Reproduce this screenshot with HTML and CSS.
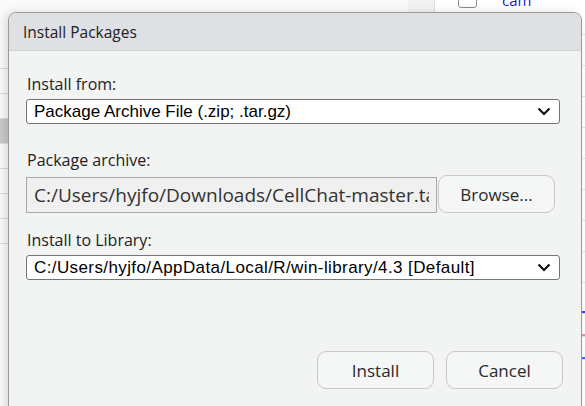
FILE: index.html
```html
<!DOCTYPE html>
<html dir="ltr" lang="en">
  <head>
    <meta charset="utf-8">
    <title>Install Packages</title>
    <link rel="stylesheet" href="styles.css">
  </head>
  <body>
    <div class="backdrop">
      <div class="leftpane">
        <div class="row"></div>
        <div class="row"></div>
        <div class="row"></div>
        <div class="row selected"></div>
        <div class="row"></div>
        <div class="row"></div>
        <div class="row"></div>
        <div class="row"></div>
      </div>
      <div class="midpane"></div>
      <div class="rightpane">
        <div class="pkgrow">
          <span class="checkbox"></span>
          <span class="pkgname">cam</span>
        </div>
        <div class="row"></div>
        <div class="row"></div>
        <div class="row"></div>
        <div class="row"></div>
        <div class="row"></div>
        <div class="row"></div>
        <div class="row"></div>
        <div class="row"></div>
        <div class="row mark-blue"></div>
        <div class="row short mark-pink"></div>
        <div class="row short mark-mixed"></div>
      </div>
    </div>

    <div class="dialog">
      <div class="titlebar">Install Packages</div>
      <div class="dialogbody">
        <label class="fieldlabel">Install from:</label>
        <div class="selectbox">
          <span>Package Archive File (.zip; .tar.gz)</span>
          <svg class="chevron" width="14" height="9" viewBox="0 0 14 9"><path d="M1.5 1.5 L7 7 L12.5 1.5" fill="none" stroke="#111" stroke-width="2.2"/></svg>
        </div>

        <label class="fieldlabel spaced">Package archive:</label>
        <div class="filerow">
          <input class="filepath" type="text" value="C:/Users/hyjfo/Downloads/CellChat-master.tar.gz" readonly>
          <button class="dlgbutton browse">Browse...</button>
        </div>

        <label class="fieldlabel">Install to Library:</label>
        <div class="selectbox library">
          <span>C:/Users/hyjfo/AppData/Local/R/win-library/4.3 [Default]</span>
          <svg class="chevron" width="14" height="9" viewBox="0 0 14 9"><path d="M1.5 1.5 L7 7 L12.5 1.5" fill="none" stroke="#111" stroke-width="2.2"/></svg>
        </div>

        <div class="actions">
          <button class="dlgbutton">Install</button>
          <button class="dlgbutton">Cancel</button>
        </div>
      </div>
    </div>
  </body>
</html>
```

FILE: styles.css
```css
html, body {
  margin: 0;
  height: 100%;
  overflow: hidden;
  background: #fff;
  font-family: "Open Sans", "Noto Sans", sans-serif;
}
.backdrop {
  display: flex;
  height: 100%;
}
.leftpane {
  width: 408px;
  padding-top: 44px;
  background: #fafafa;
}
.leftpane .row {
  height: 24px;
  border-bottom: 1px solid #dcdcdc;
}
.leftpane .selected {
  background: #c9c9c9;
}
.midpane {
  width: 26px;
  background: #f2f2f2;
  border-right: 1px solid #dedede;
}
.rightpane {
  flex: 1;
}
.rightpane .row {
  height: 30px;
  border-bottom: 1px solid #e2e2e2;
}
.rightpane .short {
  height: 22px;
}
.pkgrow {
  height: 34px;
  display: flex;
  align-items: flex-start;
  border-bottom: 1px solid #e2e2e2;
}
.checkbox {
  width: 17px;
  height: 12px;
  margin: -6px 0 0 23px;
  border: 1px solid #8a8a8a;
  border-radius: 3px;
}
.pkgname {
  margin: -10px 0 0 25px;
  color: #1a1ad6;
  font-size: 15px;
}
.mark-blue { box-shadow: inset 2px -8px 0 -6px #2b4cd8; }
.mark-pink { box-shadow: inset 2px -8px 0 -6px #e88aa6; }
.mark-mixed { box-shadow: inset 2px -8px 0 -6px #3a6ee8; }

/* the modal sits over the package pane */
.dialog {
  position: absolute;
  left: 8px;
  top: 12px;
  width: 572px;
  height: 420px;
  border: 1px solid #9a9a9a;
  border-radius: 8px 8px 0 0;
  background: #f2f3f3;
  box-shadow: -3px 0 8px rgba(0, 0, 0, 0.12);
  overflow: hidden;
}
.titlebar {
  height: 37px;
  line-height: 38px;
  padding-left: 14px;
  background: #dfe0e3;
  border-bottom: 1px solid #d4d5d8;
  color: #222;
  font-size: 15.5px;
}
.dialogbody {
  display: flex;
  flex-direction: column;
  padding: 23px 19px 0 17px;
}
.fieldlabel {
  color: #222;
  font-size: 16px;
  line-height: 20px;
  margin-left: 1px;
  margin-bottom: 5px;
}
.spaced {
  margin-top: 26px;
}
.selectbox {
  display: flex;
  align-items: center;
  justify-content: space-between;
  height: 23px;
  margin-right: 2px;
  padding: 0 6px 0 7px;
  background: #fff;
  border: 1px solid #767676;
  border-radius: 3px;
  color: #000;
  font-family: "Liberation Sans", Arial, sans-serif;
  font-size: 17px;
}
.library {
  letter-spacing: 0.4px;
}
.chevron {
  margin-right: 2px;
}
.filerow {
  display: flex;
  align-items: flex-end;
  margin-bottom: 17px;
}
.filepath {
  box-sizing: border-box;
  width: 411px;
  height: 36px;
  margin: 0;
  padding: 0 7px;
  background: #f0f0f0;
  border: 1px solid #a8a8a8;
  color: #333;
  font-family: "Open Sans", "Noto Sans", sans-serif;
  font-size: 19px;
  outline: none;
}
.dlgbutton {
  box-sizing: border-box;
  width: 117px;
  height: 38px;
  background: #f5f6f6;
  border: 1px solid #c8c8c8;
  border-radius: 9px;
  color: #2a2a2a;
  font-family: "Open Sans", "Noto Sans", sans-serif;
  font-size: 17px;
}
.browse {
  margin-left: 1px;
}
.actions {
  display: flex;
  justify-content: flex-end;
  gap: 12px;
  margin-top: 71px;
  margin-right: -1px;
}
```
